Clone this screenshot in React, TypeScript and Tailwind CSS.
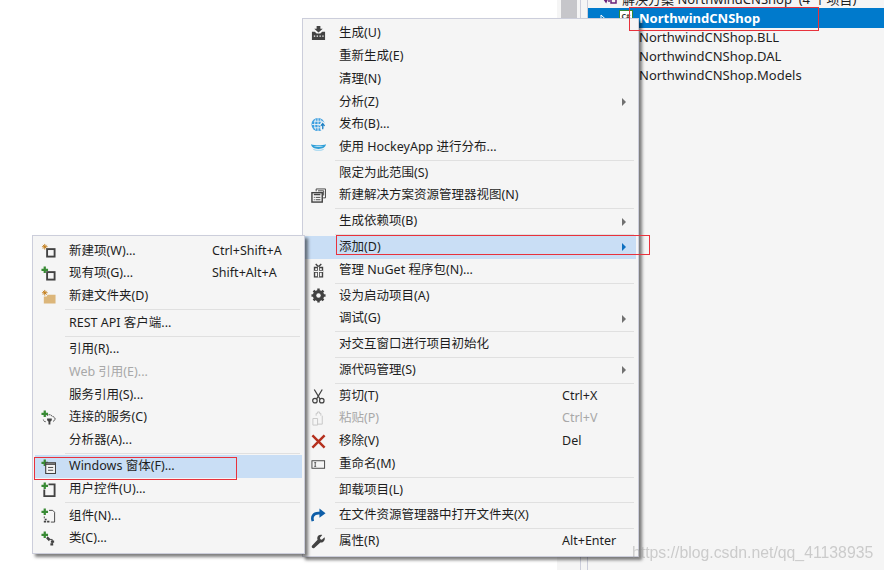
import { ReactNode } from "react";

const FONT = "font-['Noto_Sans','Noto_Sans_CJK_SC',sans-serif]";

type Item = {
  label?: string;
  key?: string;
  icon?: ReactNode;
  arrow?: boolean;
  disabled?: boolean;
  active?: boolean;
  sep?: boolean;
};

const Dark = "#424242";

const Star = () => (
  <g stroke="#c27d1a" strokeWidth="1">
    <path d="M4 1v6M1 4h6M2 2l4 4M6 2l-4 4" />
  </g>
);
const Plus = () => <path d="M4 0.5v7M0.5 4h7" stroke="#388a34" strokeWidth="2.4" />;

const Ico = ({ children }: { children: ReactNode }) => (
  <svg width="15" height="15" viewBox="0 0 16 16" fill="none">
    {children}
  </svg>
);

const icons = {
  build: (
    <Ico>
      <path d="M6 0h4v3h2.500L8 7 3.500 3H6z" fill={Dark} />
      <path d="M1 6h3l2 2h4l2-2h3v9H1z" fill={Dark} />
      <path d="M3 10h1.500v1.500H3zM6 10h1.500v1.500H6zM9 10h1.500v1.500H9zM12 10h1.500v1.500H12z" fill="#f5f5f5" />
    </Ico>
  ),
  publish: (
    <Ico>
      <circle cx="7.500" cy="8" r="7" fill="#3d9fe0" />
      <path d="M1 8h13M7.500 1v14M3 4.500h9M3 11.500h9M5 2.500c-1.500 3.500-1.500 7.500 0 11M10 2.500c1.500 3.500 1.500 7.500 0 11" stroke="#f5f5f5" strokeWidth="0.9" />
      <path d="M12 14V8.500M9.500 9.500l3-3 3 3" stroke="#f5f5f5" strokeWidth="3" />
      <path d="M12.500 13V7.500M10.500 9.500l2-2.500 2 2.500" stroke="#1d80c4" strokeWidth="1.300" />
    </Ico>
  ),
  hockey: (
    <Ico>
      <path d="M0 4.500c4 1.500 12 1.500 16 0-.5 3-3.500 5-8 5s-7.500-2-8-5z" fill="#2f9fd8" />
      <path d="M3 6.300c3 .5 7 .5 10 0-1 .8-3 1.200-5 1.200s-4-.4-5-1.200z" fill="#d8eef9" />
      <path d="M1.500 9c3 2 10 2 13 0-1.500 2-3.500 2.500-6.500 2.500S3 11 1.500 9z" fill="#9bd3ef" />
    </Ico>
  ),
  slnView: (
    <Ico>
      <path d="M5.500 3.500V1h10v9.500H13" stroke={Dark} strokeWidth="1" />
      <path d="M7.500 3h6M13.500 3v5" stroke={Dark} strokeWidth="1" />
      <rect x="1" y="5" width="11" height="10" stroke={Dark} strokeWidth="1.500" />
      <path d="M3 7h7" stroke={Dark} strokeWidth="1.500" />
      <path d="M3 10h1M5 10h5M3 12.500h1M5 12.500h5" stroke={Dark} strokeWidth="1" />
    </Ico>
  ),
  nuget: (
    <Ico>
      <path d="M5 1l3 3 3-3" stroke={Dark} strokeWidth="1.500" />
      <rect x="3" y="4" width="10" height="11.500" fill={Dark} />
      <path d="M3 9h10M8 4v11.500" stroke="#f5f5f5" strokeWidth="1.300" />
      <path d="M4.500 10.500h2v3.500h-2zM9.500 10.500h2v3.500h-2zM4.500 5.500h2v2h-2zM9.500 5.500h2v2h-2z" fill="#f5f5f5" />
    </Ico>
  ),
  gear: (
    <Ico>
      <circle cx="8" cy="8" r="4.500" stroke={Dark} strokeWidth="3" />
      <path d="M8 .5v15M.5 8h15M2.700 2.700l10.600 10.600M13.300 2.700L2.700 13.300" stroke={Dark} strokeWidth="2.600" />
      <circle cx="8" cy="8" r="2.400" fill="#f5f5f5" />
    </Ico>
  ),
  cut: (
    <Ico>
      <path d="M3.500 0.500l6 10M12 .5l-6 10" stroke={Dark} strokeWidth="1.300" />
      <circle cx="4.200" cy="12.500" r="2.400" stroke={Dark} strokeWidth="1.300" />
      <circle cx="11.500" cy="12.500" r="2.400" stroke={Dark} strokeWidth="1.300" />
    </Ico>
  ),
  paste: (
    <Ico>
      <path d="M5.500 5V2.500h1.500V1h2v1.500h1.500V5M12 5v9H7M2 8h5v7H2z" stroke="#c6c6c6" strokeWidth="1" />
    </Ico>
  ),
  remove: (
    <Ico>
      <path d="M1.500 1.500l13 13M14.500 1.500l-13 13" stroke="#b5301e" strokeWidth="2.600" />
    </Ico>
  ),
  rename: (
    <Ico>
      <rect x="1" y="4" width="13.500" height="8" stroke={Dark} strokeWidth="1" />
      <path d="M3.500 6h2M3.500 10h2M4.500 6v4" stroke={Dark} strokeWidth="0.900" />
    </Ico>
  ),
  open: (
    <Ico>
      <path d="M2 14c-1.500-4 0-8.500 6-8.500h2" stroke="#0e5ea8" strokeWidth="2.800" />
      <path d="M9 .5l6.500 5L9 10.500z" fill="#0e5ea8" />
    </Ico>
  ),
  wrench: (
    <Ico>
      <path d="M14.500 3.500L11.500 6 10 5.500 9.500 4l2.500-3c-2.500-.8-5 .5-5.300 3-.1.800 0 1.500.3 2.200L1 12.500c-1 1.500 1 3.500 2.500 2.500l6.500-6c3 1 5.500-2.500 4.500-5.500z" fill={Dark} />
    </Ico>
  ),
  newItem: (
    <Ico>
      <Star />
      <rect x="6.500" y="6.500" width="8" height="8" stroke={Dark} strokeWidth="2" />
    </Ico>
  ),
  existing: (
    <Ico>
      <Plus />
      <rect x="6.500" y="6.500" width="8" height="8" stroke={Dark} strokeWidth="2" />
    </Ico>
  ),
  newFolder: (
    <Ico>
      <Star />
      <path d="M3 8h3l1-2h8.500v9.500H3z" fill="#dcb67a" />
    </Ico>
  ),
  service: (
    <Ico>
      <Plus />
      <path d="M6 6.500c2-2.500 5.500-1.500 6 .5 2 0 3 1.200 3 2.500s-1 2.500-2.500 2.500M5 12.500c-1.500 0-2.500-1-2.500-2.300" stroke={Dark} strokeWidth="1" strokeDasharray="2 0.600" />
      <path d="M6.500 9h5v2l-1.500 1.500v3H8v-3L6.500 11z" fill={Dark} />
    </Ico>
  ),
  form: (
    <Ico>
      <Plus />
      <rect x="5" y="4" width="10.500" height="11.500" fill="#f5f5f5" stroke={Dark} strokeWidth="1.200" />
      <path d="M5 5.500h10.500" stroke={Dark} strokeWidth="1.500" />
      <path d="M7.500 9h5.500M7.500 12h5.500" stroke={Dark} strokeWidth="1" />
    </Ico>
  ),
  control: (
    <Ico>
      <Plus />
      <path d="M8 2.500h6.500v12.500H3.500V8" stroke={Dark} strokeWidth="2" />
    </Ico>
  ),
  component: (
    <Ico>
      <Plus />
      <path d="M8.500 2.500h4l2 2V15h-4M3.500 9v2" stroke={Dark} strokeWidth="1" />
      <path d="M4 11.500h2v1.500H4zM3 13.500h2.500V15.500H3zM6.500 13.500H9V15.500H6.500z" fill={Dark} />
    </Ico>
  ),
  cls: (
    <Ico>
      <Plus />
      <path d="M7 5.500l3 3 -1.500 2.500L5.500 8zM10.500 10h3.500v2.500h-3.500zM10 13h3v2.500h-3z" fill={Dark} />
      <path d="M9.500 9h2.500v5" stroke={Dark} strokeWidth="1" />
    </Ico>
  ),
};

const mainItems: Item[] = [
  { label: "生成(U)", icon: icons.build },
  { label: "重新生成(E)" },
  { label: "清理(N)" },
  { label: "分析(Z)", arrow: true },
  { label: "发布(B)...", icon: icons.publish },
  { label: "使用 HockeyApp 进行分布...", icon: icons.hockey },
  { sep: true },
  { label: "限定为此范围(S)" },
  { label: "新建解决方案资源管理器视图(N)", icon: icons.slnView },
  { sep: true },
  { label: "生成依赖项(B)", arrow: true },
  { sep: true },
  { label: "添加(D)", arrow: true, active: true },
  { label: "管理 NuGet 程序包(N)...", icon: icons.nuget },
  { sep: true },
  { label: "设为启动项目(A)", icon: icons.gear },
  { label: "调试(G)", arrow: true },
  { sep: true },
  { label: "对交互窗口进行项目初始化" },
  { sep: true },
  { label: "源代码管理(S)", arrow: true },
  { sep: true },
  { label: "剪切(T)", key: "Ctrl+X", icon: icons.cut },
  { label: "粘贴(P)", key: "Ctrl+V", icon: icons.paste, disabled: true },
  { label: "移除(V)", key: "Del", icon: icons.remove },
  { label: "重命名(M)", icon: icons.rename },
  { sep: true },
  { label: "卸载项目(L)" },
  { sep: true },
  { label: "在文件资源管理器中打开文件夹(X)", icon: icons.open },
  { sep: true },
  { label: "属性(R)", key: "Alt+Enter", icon: icons.wrench },
];

const subItems: Item[] = [
  { label: "新建项(W)...", key: "Ctrl+Shift+A", icon: icons.newItem },
  { label: "现有项(G)...", key: "Shift+Alt+A", icon: icons.existing },
  { label: "新建文件夹(D)", icon: icons.newFolder },
  { sep: true },
  { label: "REST API 客户端..." },
  { sep: true },
  { label: "引用(R)..." },
  { label: "Web 引用(E)...", disabled: true },
  { label: "服务引用(S)..." },
  { label: "连接的服务(C)", icon: icons.service },
  { label: "分析器(A)..." },
  { sep: true },
  { label: "Windows 窗体(F)...", icon: icons.form, active: true },
  { label: "用户控件(U)...", icon: icons.control },
  { sep: true },
  { label: "组件(N)...", icon: icons.component },
  { label: "类(C)...", icon: icons.cls },
];

function Menu({ items, keyCol, rowH, sepH }: { items: Item[]; keyCol: string; rowH: string; sepH: string }) {
  return (
    <div className="flex flex-col px-[2px] pb-[3px] pt-[3.500px]">
      {items.map((item, i) =>
        item.sep ? (
          <div key={i} className={`flex ${sepH} items-center pl-[30px] pr-[2px]`}>
            <div className="h-px w-full bg-[#e0e0e0]" />
          </div>
        ) : (
          <div
            key={i}
            className={`flex ${rowH} items-center ${item.active ? "bg-[#c9def5]" : ""} ${
              item.disabled ? "text-[#a8a8a8]" : "text-[#1e1e1e]"
            }`}
          >
            <div className="mr-[7px] flex w-[27px] shrink-0 justify-center">{item.icon}</div>
            <span className="flex-1 whitespace-nowrap">{item.label}</span>
            {item.key && <span className={`${keyCol} whitespace-nowrap`}>{item.key}</span>}
            {item.arrow && (
              <span
                className={`mr-[10px] h-0 w-0 border-y-[4px] border-l-[4px] border-y-transparent ${
                  item.active ? "border-l-[#0e70c0]" : "border-l-[#717171]"
                }`}
              />
            )}
          </div>
        ),
      )}
    </div>
  );
}

export default function App() {
  return (
    <div className={`relative flex h-[570px] w-[884px] overflow-hidden bg-white text-[12.500px] ${FONT}`}>
      <div className="w-[557px] shrink-0 bg-white" />

      {/* solution explorer behind the menus */}
      <div className="flex flex-1 bg-[#f5f5f5]">
        <div className="ml-[4px] h-[20px] w-[16px] bg-[#c6c6ca]" />
        <div className="ml-[3px] w-[8px] border-x border-[#cccedb]" />
        <div className="flex-1 overflow-hidden text-[13px] leading-[19px] text-[#1e1e1e]">
          <div className="-mt-[10px] flex h-[18px] items-center whitespace-pre pl-[13px]">
            <svg width="16" height="10" viewBox="0 0 16 10" fill="none" className="mr-[5px] shrink-0">
              <path d="M1 2l4 6 3-7v7M10 3h5v6h-5z" stroke="#68217a" strokeWidth="1.500" />
            </svg>
            {"解决方案 NorthwindCNShop  (4 个项目)"}
          </div>
          <div className="flex h-[20px] items-center bg-[#007acc] font-bold text-white">
            <svg width="8" height="12" viewBox="0 0 8 12" fill="none" className="ml-[12px] mt-[4px] shrink-0">
              <path d="M1 1l5.500 5L1 11z" stroke="#ffffff" strokeWidth="1" />
            </svg>
            <div className="ml-[11px] mb-[3px] flex h-[14px] w-[14px] shrink-0 items-center justify-center border border-[#388a34] bg-white text-[7px] leading-none text-[#333333]">
              C#
            </div>
            <span className="ml-[6px]">NorthwindCNShop</span>
          </div>
          <div className="pl-[51px]">NorthwindCNShop.BLL</div>
          <div className="pl-[51px]">NorthwindCNShop.DAL</div>
          <div className="pl-[51px]">NorthwindCNShop.Models</div>
        </div>
      </div>

      <div className="absolute left-[302px] top-[18px] w-[337px] border border-[#cccedb] bg-[#f5f5f5] shadow-[3px_3px_3px_rgba(0,0,0,0.5)]">
        <Menu items={mainItems} keyCol="w-[74px]" rowH="h-[22.700px]" sepH="h-[3.130px]" />
      </div>

      <div className="absolute left-[32px] top-[235px] w-[273px] border border-[#cccedb] bg-[#f5f5f5] shadow-[3px_3px_3px_rgba(0,0,0,0.5)]">
        <Menu items={subItems} keyCol="w-[90px]" rowH="h-[22.900px]" sepH="h-[3.300px]" />
      </div>

      {/* red annotation boxes */}
      <div className="absolute left-[629px] top-[7px] h-[24px] w-[190px] border border-[#e8323c]" />
      <div className="absolute left-[336px] top-[235px] h-[20px] w-[314px] border border-[#e8323c]" />
      <div className="absolute left-[34px] top-[457px] h-[23px] w-[203px] border border-[#e8323c]" />

      <div className="absolute left-[632px] top-[541px] whitespace-nowrap font-['Liberation_Sans',sans-serif] text-[15.800px] text-[#9a9a9a]/45 blur-[0.4px]">
        https://blog.csdn.net/qq_41138935
      </div>
    </div>
  );
}
